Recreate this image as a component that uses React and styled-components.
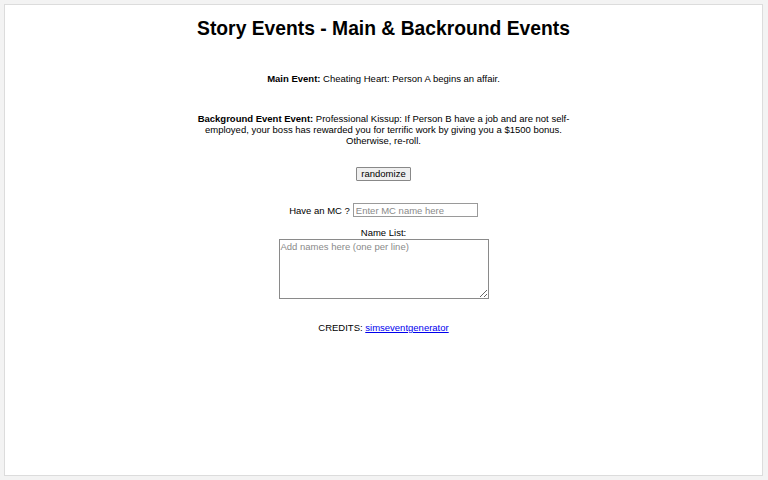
import React from "react";
import styled, { createGlobalStyle } from "styled-components";

const Global = createGlobalStyle`
  html, body { margin: 0; padding: 0; background: #f3f3f3; }
  body { font-family: "Liberation Sans", Arial, sans-serif; }
`;

const Frame = styled.div`
  margin: 4px 5px 4px 4px;
  background: #ffffff;
  border: 1px solid #dcdcdc;
  box-sizing: border-box;
  height: 472px;
  display: flex;
  flex-direction: column;
  align-items: center;
`;

const Title = styled.h1`
  margin: 12px 0 0 0;
  font-size: 19.3px;
  font-weight: bold;
  color: #000;
  line-height: 24px;
`;

const Para = styled.p`
  margin: ${(p) => p.$mt}px 0 0 0;
  width: 380px;
  font-size: 9.5px;
  line-height: 11px;
  text-align: center;
  color: #000;
`;

const Button = styled.button`
  margin-top: 21px;
  font-family: "Liberation Sans", Arial, sans-serif;
  font-size: 9.5px;
  padding: 0 4px;
  height: 14px;
  line-height: 12px;
  background: #efefef;
  border: 1px solid #888;
  border-radius: 1px;
  color: #000;
`;

const Row = styled.div`
  margin-top: ${(p) => p.$mt}px;
  display: flex;
  align-items: center;
  gap: 3px;
  font-size: 9.5px;
  color: #000;
`;

const Input = styled.input`
  width: 125px;
  height: 14px;
  box-sizing: border-box;
  border: 1px solid #9a9a9a;
  font-family: "Liberation Sans", Arial, sans-serif;
  font-size: 9.5px;
  padding: 0 2px;
  &::placeholder { color: #8a8a8a; }
`;

const Label = styled.div`
  margin-top: 10px;
  font-size: 9.5px;
  line-height: 12px;
  color: #000;
`;

const Area = styled.textarea`
  width: 210px;
  height: 60px;
  box-sizing: border-box;
  border: 1px solid #8a8a8a;
  font-family: "Liberation Sans", Arial, sans-serif;
  font-size: 9.5px;
  padding: 1px 1px;
  resize: vertical;
  &::placeholder { color: #8a8a8a; }
`;

const Credits = styled.div`
  margin-top: 23px;
  font-size: 9.5px;
  color: #000;
  a { color: #0000ee; }
`;

export default function App() {
  return (
    <>
      <Global />
      <Frame>
        <Title>Story Events - Main &amp; Backround Events</Title>
        <Para $mt={32}>
          <b>Main Event:</b> Cheating Heart: Person A begins an affair.
        </Para>
        <Para $mt={29}>
          <b>Background Event Event:</b> Professional Kissup: If Person B have a
          job and are not self-employed, your boss has rewarded you for terrific
          work by giving you a $1500 bonus. Otherwise, re-roll.
        </Para>
        <Button>randomize</Button>
        <Row $mt={22}>
          Have an MC ? <Input placeholder="Enter MC name here" />
        </Row>
        <Label>Name List:</Label>
        <Area placeholder="Add names here (one per line)" />
        <Credits>
          CREDITS: <a href="#">simseventgenerator</a>
        </Credits>
      </Frame>
    </>
  );
}
